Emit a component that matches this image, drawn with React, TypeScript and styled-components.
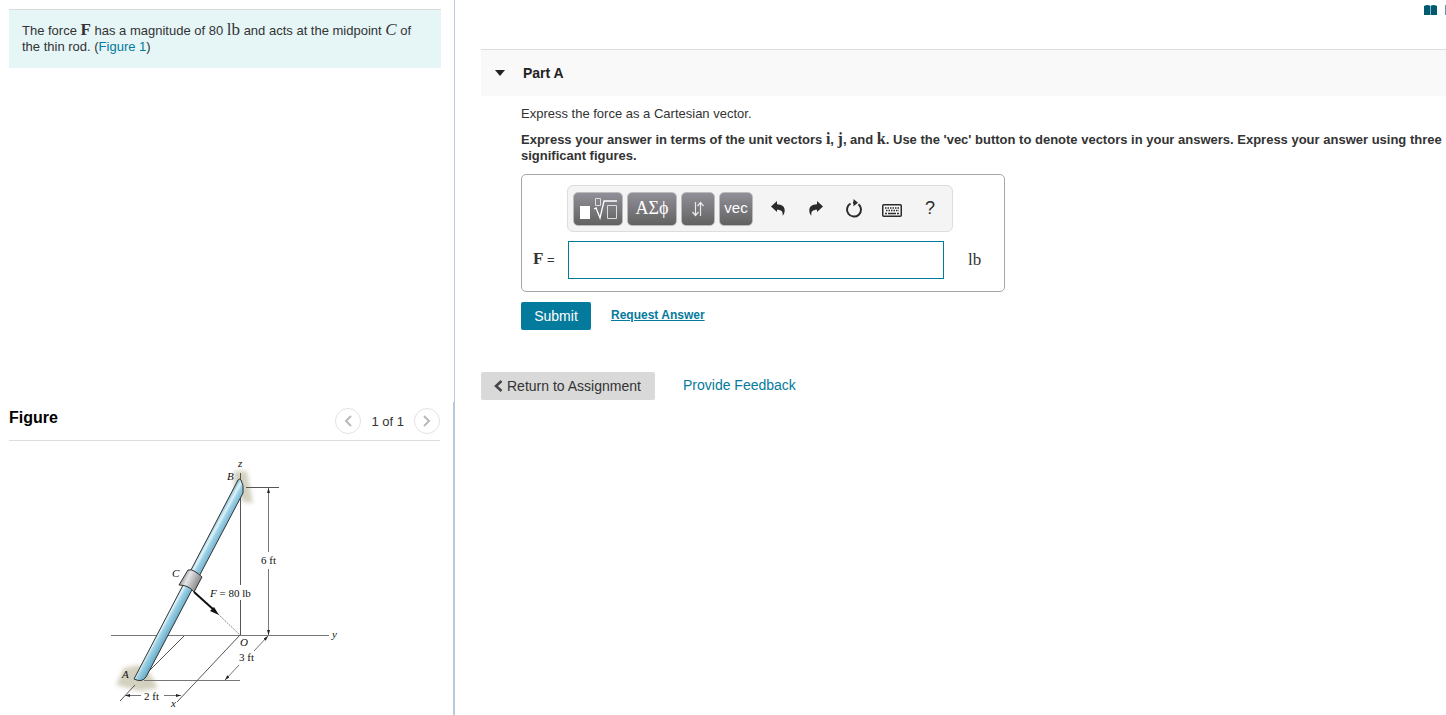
import React from 'react';
import styled, { createGlobalStyle } from 'styled-components';

const GlobalStyle = createGlobalStyle`
  * { box-sizing: border-box; }
  body { margin: 0; background: #fff; color: #333; font: 13px/16px "Liberation Sans", Arial, sans-serif; overflow-x: hidden; }
  button, input { font-family: inherit; }
  button { cursor: pointer; }
  p, h1, h2 { margin: 0; }
`;

const Page = styled.div`
  display: grid;
  grid-template-columns: 455px minmax(0, 1fr);
  min-height: 100vh;
`;

const Side = styled.aside`
  display: flex;
  flex-direction: column;
`;

const Problem = styled.section`
  flex: 1;
  padding: 9px 13px 0 9px;
  border-right: 1px solid #b9c9da;
`;

const Statement = styled.p`
  padding: 13px;
  border-top: 1px solid #d9dcd9;
  background: #e6f5f6;
`;

const MathText = styled.span<{ $bold?: boolean; $italic?: boolean; $large?: boolean }>`
  font-family: "Liberation Serif", serif;
  font-size: ${(p) => (p.$large ? 17 : 16)}px;
  line-height: 1px;
  font-weight: ${(p) => (p.$bold ? 700 : 400)};
  font-style: ${(p) => (p.$italic ? 'italic' : 'normal')};
`;

const Link = styled.a<{ $size?: number; $strong?: boolean }>`
  color: #047a9c;
  font-size: ${(p) => p.$size ?? 13}px;
  font-weight: ${(p) => (p.$strong ? 700 : 400)};
  text-decoration: ${(p) => (p.$strong ? 'underline' : 'none')};
`;

const FigurePane = styled.section`
  padding: 0 13px 0 9px;
  border-right: 2px solid #b6c9dd;
`;

const FigureHead = styled.header`
  display: flex;
  align-items: center;
  justify-content: space-between;
  height: 39px;
  border-bottom: 1px solid #ddd;
`;

const FigureTitle = styled.h2`
  padding-bottom: 6px;
  font-size: 16px;
  line-height: 20px;
  color: #000;
`;

const Pager = styled.nav`
  display: flex;
  align-items: center;
  gap: 10px;
  span { padding-top: 2px; }
`;

const RoundButton = styled.button`
  display: grid;
  place-items: center;
  width: 26px;
  height: 26px;
  padding: 0;
  border: 1px solid #e3e3e3;
  border-radius: 50%;
  background: #fff;
`;

const Drawing = styled.svg`
  display: block;
  width: 250px;
  height: 260px;
  margin: 14px 0 0 91px;
  font-family: "Liberation Serif", serif;
  font-size: 11px;
  fill: #111;
`;

const Main = styled.main`
  padding-left: 26px;
`;

const TopBar = styled.div`
  display: flex;
  justify-content: flex-end;
  height: 49px;
  padding-top: 5px;
`;

const IconLink = styled.a<{ $clipped?: boolean }>`
  width: ${(p) => (p.$clipped ? 1 : 21)}px;
  height: 11px;
  overflow: hidden;
  svg { display: block; }
`;

const PartHead = styled.header`
  display: flex;
  align-items: center;
  height: 47px;
  border-top: 1px solid #ddd;
  background: #f9f9f9;
`;

const Collapse = styled.button`
  display: flex;
  align-items: center;
  gap: 18px;
  padding: 0 14px;
  border: 0;
  background: none;
  color: #222;
  font-size: 14px;
  font-weight: 700;
  line-height: 20px;
`;

const PartBody = styled.div`
  padding: 10px 0 0 40px;
`;

const Instructions = styled.p`
  margin: 10px 0;
  font-weight: 700;
`;

const AnswerBox = styled.form`
  width: 484px;
  max-width: 100%;
  height: 118px;
  padding: 10px 11px;
  border: 1px solid #a6a6a6;
  border-radius: 5px;
`;

const Toolbar = styled.div`
  display: flex;
  align-items: center;
  width: 386px;
  height: 47px;
  margin: 0 0 9px 34px;
  padding: 0 3px 0 5px;
  border: 1px solid #ddd;
  border-radius: 6px;
  background: #f4f4f4;
`;

const DarkKey = styled.button<{ $wide?: boolean; $serif?: boolean }>`
  display: grid;
  place-items: center;
  flex: none;
  width: ${(p) => (p.$wide ? 50 : 34)}px;
  height: 34px;
  margin-right: 4px;
  padding: 0 0 2px;
  border: 1px solid #bbb;
  border-radius: 5px;
  background: linear-gradient(#918f98, #626262);
  color: #fff;
  font-size: ${(p) => (p.$serif ? 18 : 15)}px;
  line-height: 20px;
  && { font-family: ${(p) => (p.$serif ? '"Liberation Serif", serif' : '"Liberation Sans", sans-serif')}; }
`;

const PlainKey = styled.button`
  display: grid;
  place-items: center;
  flex: none;
  width: 38px;
  height: 34px;
  padding: 0;
  border: 0;
  background: none;
  color: #2b2b2b;
  font-size: 18px;
  ${DarkKey} + & { margin-left: 2px; }
`;

const AnswerRow = styled.div`
  display: grid;
  grid-template-columns: 35px 376px auto;
  align-items: center;
`;

const AnswerInput = styled.input`
  width: 100%;
  height: 38px;
  padding: 0 8px;
  border: 1px solid #047a9c;
  outline: 0;
  background: #fff;
  font-size: 16px;
`;

const Unit = styled(MathText)`
  padding: 0 0 2px 24px;
`;

const Actions = styled.div`
  display: flex;
  align-items: center;
  gap: 20px;
  margin-top: 10px;
  font-size: 12px;
  a { padding-bottom: 3px; }
`;

const Submit = styled.button`
  width: 70px;
  height: 28px;
  padding: 0;
  border: 0;
  border-radius: 2px;
  background: #047a9c;
  color: #fff;
  font-size: 14px;
`;

const Footer = styled.footer`
  display: flex;
  align-items: center;
  gap: 28px;
  margin-top: 42px;
  a { padding-bottom: 2px; }
`;

const ReturnButton = styled.button`
  display: flex;
  align-items: center;
  gap: 4px;
  width: 174px;
  height: 28px;
  padding: 0 0 0 13px;
  border: 0;
  border-radius: 2px;
  background: #d9d9d9;
  color: #333;
  font-size: 14px;
`;

function Chevron({ right }: { right?: boolean }) {
  return (
    <svg width="10" height="12" viewBox="0 0 10 12" fill="none" stroke="#b9b9b9" strokeWidth="2">
      <path d={right ? 'M2 1l5 5-5 5' : 'M8 1L3 6l5 5'} />
    </svg>
  );
}

function BookIcon() {
  return (
    <svg width="13" height="11" viewBox="0 0 13 11">
      <path d="M0 1Q3-.5 6 .5V10H0zM7 .5q3-1 6 .5v9H7z" fill="#005a70" />
      <path d="M6.500 1v9" stroke="#8db4be" />
    </svg>
  );
}

function UndoIcon({ flip }: { flip?: boolean }) {
  return (
    <svg width="14" height="15" viewBox="0 0 14 15">
      <path
        transform={flip ? 'matrix(-1 0 0 1 14 0)' : undefined}
        d="M0 5.500L6 0v3.200c5 .1 7.700 2.300 7.700 6 0 2.300-.8 4.200-2.100 5.500.6-4-.9-6-5.600-6V11z"
        fill="currentColor"
      />
    </svg>
  );
}

function ResetIcon() {
  return (
    <svg width="18" height="19" viewBox="0 0 18 19">
      <path d="M13.500 5.200A7 7 0 1 1 5.500 4.500M8 3.800h3" fill="none" stroke="currentColor" strokeWidth="2" />
      <path d="M8.500 0l4.500 3.800-4.500 3.400z" fill="currentColor" />
    </svg>
  );
}

function KeyboardIcon() {
  return (
    <svg width="20" height="17" viewBox="0 -4 20 17">
      <rect x=".75" y=".75" width="18.500" height="11.500" rx="1" fill="#f8f8f8" stroke="currentColor" strokeWidth="1.500" />
      <path d="M3 4h14M4 6.500h13" stroke="currentColor" strokeWidth="1.500" strokeDasharray="1.500 1" />
      <path d="M3 9.500h2M6 9.500h8M15 9.500h2" stroke="currentColor" strokeWidth="1.500" />
    </svg>
  );
}

function RootIcon() {
  return (
    <svg width="38" height="24" viewBox="0 0 38 24">
      <path d="M1 10h10v13H1z" fill="#fff" />
      <path d="M16.500 2.500h5v7h-5zM28.500 9.500h9v13h-9z" fill="none" stroke="#ddd" />
      <path d="M15 13l2-1 4 10 4-17h13" fill="none" stroke="#fff" strokeWidth="1.300" />
    </svg>
  );
}

function ArrowsIcon() {
  return (
    <svg width="14" height="18" viewBox="0 -2 14 18" fill="none" stroke="#e9e9e9" strokeWidth="1.200">
      <path d="M4.500 1v13M1.500 11l3 3.500 3-3.500M9.500 15V2M6.500 5l3-3.500 3 3.500" />
    </svg>
  );
}

function RodFigure() {
  return (
    <Drawing viewBox="100 455 250 260" role="img" aria-label="Thin rod AB with force F acting at C">
      <defs>
        <linearGradient id="rod" gradientUnits="userSpaceOnUse" x1="184" y1="579" x2="195" y2="585">
          <stop offset="0" stopColor="#7dbbd4" />
          <stop offset=".3" stopColor="#dff3fb" />
          <stop offset=".5" stopColor="#9fd2e6" />
          <stop offset="1" stopColor="#69aecb" />
        </linearGradient>
        <linearGradient id="collar" gradientUnits="userSpaceOnUse" x1="180" y1="576" x2="201" y2="586">
          <stop offset="0" stopColor="#77777b" />
          <stop offset=".35" stopColor="#e6e6e8" />
          <stop offset="1" stopColor="#707074" />
        </linearGradient>
        <filter id="soft" x="-30%" y="-30%" width="160%" height="160%">
          <feGaussianBlur stdDeviation="2" />
        </filter>
        <marker id="tip" viewBox="0 0 5 3" refX="5" refY="1.500" markerWidth="5" markerHeight="3" markerUnits="userSpaceOnUse" orient="auto-start-reverse">
          <path d="M0 0l5 1.500L0 3z" fill="#222" />
        </marker>
      </defs>
      <g fill="#d3d0bf" filter="url(#soft)">
        <path d="M234 471h13l2 12 4 20-10-1-9-15z" />
        <path d="M124 668l15-3 11 9 8 14-18 3-24-6z" />
      </g>
      <g fill="none" stroke="#555">
        <path d="M240.500 473v112M240.500 600v35M246 487.500h33" />
        <path d="M111 635.500h218M144 680.500h96" stroke="#777" />
        <path d="M240 635l-63 67M184 636l-37 37M135 685l-15 16" />
        <path d="M218 614l22 21" stroke="#888" strokeDasharray="2 1" />
      </g>
      <g fill="none" stroke="#777">
        <path d="M268.500 552v-64" markerEnd="url(#tip)" />
        <path d="M268.500 569v66" markerEnd="url(#tip)" />
        <path d="M239 665l-14 15" markerEnd="url(#tip)" />
        <path d="M254 651l14-15" markerEnd="url(#tip)" />
        <path d="M141 695.500h-16" markerEnd="url(#tip)" />
        <path d="M164 695.500h17" markerEnd="url(#tip)" />
      </g>
      <path d="M134 679L238 480q2-2 3 0 3 5 2 13l-97 184q-4 6-12 2z" fill="url(#rod)" stroke="#333" />
      <path d="M188 570q3-1 7 1.500t7 5.500l-8 15q-3-4-7-5.500t-8-1.500z" fill="url(#collar)" stroke="#333" />
      <path d="M194 592l20 18" stroke="#111" strokeWidth="2" />
      <path d="M219 615l-9-4 4-4z" />
      <g fontStyle="italic">
        <text x="238" y="467">z</text>
        <text x="227" y="480">B</text>
        <text x="172" y="577">C</text>
        <text x="332" y="638">y</text>
        <text x="240" y="646">O</text>
        <text x="122" y="678">A</text>
        <text x="171" y="707">x</text>
      </g>
      <text x="261" y="564">6 ft</text>
      <text x="210" y="597"><tspan fontStyle="italic">F</tspan> = 80 lb</text>
      <text x="239" y="661">3 ft</text>
      <text x="144" y="700">2 ft</text>
    </Drawing>
  );
}

export default function App() {
  return (
    <>
      <GlobalStyle />
      <Page>
        <Side>
          <Problem>
            <Statement>
              The force <MathText $bold $large>F</MathText> has a magnitude of 80 <MathText $large>lb</MathText> and acts at the midpoint{' '}
              <MathText $italic $large>C</MathText> of the thin rod. (<Link href="#figure">Figure 1</Link>)
            </Statement>
          </Problem>
          <FigurePane id="figure">
            <FigureHead>
              <FigureTitle>Figure</FigureTitle>
              <Pager aria-label="Figures">
                <RoundButton aria-label="Previous figure"><Chevron /></RoundButton>
                <span>1 of 1</span>
                <RoundButton aria-label="Next figure"><Chevron right /></RoundButton>
              </Pager>
            </FigureHead>
            <RodFigure />
          </FigurePane>
        </Side>
        <Main>
          <TopBar>
            <IconLink href="#review" aria-label="Review"><BookIcon /></IconLink>
            <IconLink href="#constants" aria-label="Constants" $clipped>
              <svg width="1" height="11"><path d="M0 0h1v10H0z" fill="#5f98a6" /></svg>
            </IconLink>
          </TopBar>
          <PartHead>
            <Collapse aria-expanded="true">
              <svg width="10" height="6" viewBox="0 0 10 6"><path d="M0 0h10L5 6z" fill="#222" /></svg>
              Part A
            </Collapse>
          </PartHead>
          <PartBody>
            <p>Express the force as a Cartesian vector.</p>
            <Instructions>
              Express your answer in terms of the unit vectors <MathText $bold>i</MathText>, <MathText $bold>j</MathText>, and{' '}
              <MathText $bold>k</MathText>. Use the 'vec' button to denote vectors in your answers. Express your answer using three
              significant figures.
            </Instructions>
            <AnswerBox id="answer-form" onSubmit={(e) => e.preventDefault()}>
              <Toolbar role="toolbar" aria-label="Equation tools">
                <DarkKey type="button" $wide aria-label="Templates"><RootIcon /></DarkKey>
                <DarkKey type="button" $wide $serif>ΑΣϕ</DarkKey>
                <DarkKey type="button" aria-label="Subscripts and arrows"><ArrowsIcon /></DarkKey>
                <DarkKey type="button">vec</DarkKey>
                <PlainKey type="button" aria-label="Undo"><UndoIcon /></PlainKey>
                <PlainKey type="button" aria-label="Redo"><UndoIcon flip /></PlainKey>
                <PlainKey type="button" aria-label="Reset"><ResetIcon /></PlainKey>
                <PlainKey type="button" aria-label="Keyboard shortcuts"><KeyboardIcon /></PlainKey>
                <PlainKey type="button">?</PlainKey>
              </Toolbar>
              <AnswerRow>
                <label htmlFor="answer"><MathText $bold $large>F</MathText> =</label>
                <AnswerInput id="answer" />
                <Unit $large>lb</Unit>
              </AnswerRow>
            </AnswerBox>
            <Actions>
              <Submit form="answer-form">Submit</Submit>
              <Link href="#request" $size={12} $strong>Request Answer</Link>
            </Actions>
          </PartBody>
          <Footer>
            <ReturnButton>
              <svg width="9" height="12" viewBox="0 0 9 12"><path d="M7.500 1L2 6l5.500 5" fill="none" stroke="#444" strokeWidth="2.500" /></svg>
              Return to Assignment
            </ReturnButton>
            <Link href="#feedback" $size={14}>Provide Feedback</Link>
          </Footer>
        </Main>
      </Page>
    </>
  );
}
